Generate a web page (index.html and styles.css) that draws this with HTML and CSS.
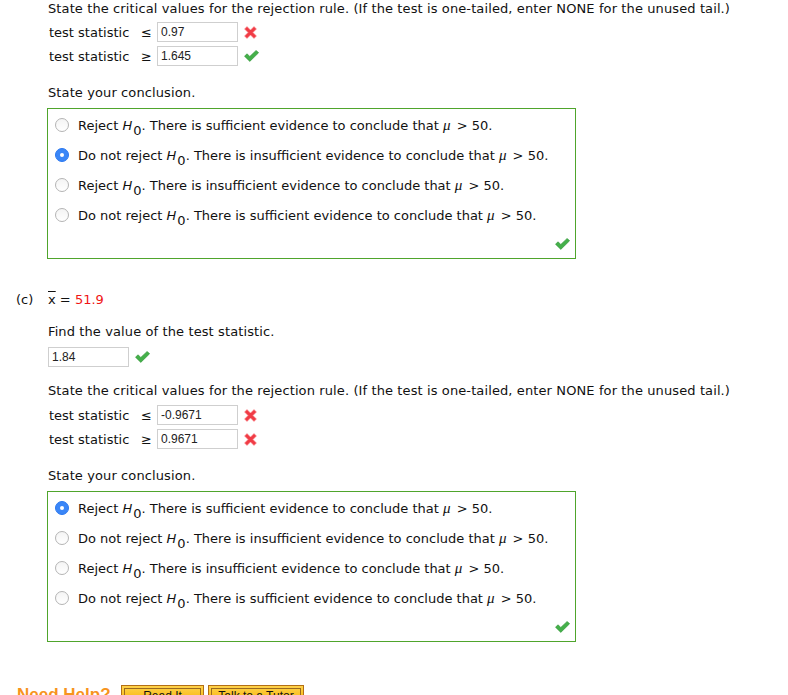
FILE: index.html
```html
<!DOCTYPE html>
<html>
<head>
<meta charset="utf-8">
<link rel="stylesheet" href="styles.css">
</head>
<body>
<div class="page">
  <div class="part cont">
    <p class="line first">State the critical values for the rejection rule. (If the test is one-tailed, enter NONE for the unused tail.)</p>
    <div class="crit">
      <div class="row"><span class="lbl">test statistic</span><span class="sym">≤</span><span class="inp">0.97</span><svg class="ico x" viewBox="0 0 13 13"><path d="M0.5 3 L3 0.5 L6.5 4 L10 0.5 L12.5 3 L9 6.5 L12.5 10 L10 12.5 L6.5 9 L3 12.5 L0.5 10 L4 6.5 Z"/></svg></div>
      <div class="row"><span class="lbl">test statistic</span><span class="sym">≥</span><span class="inp">1.645</span><svg class="ico ck" viewBox="0 0 15 12"><path d="M0.5 6.2 L3 3.8 L5.8 6.4 L12.2 0.4 L14.6 2.8 L5.8 11.4 Z"/></svg></div>
    </div>
    <p class="line sub">State your conclusion.</p>
    <div class="box">
      <div class="opt"><span class="radio"></span><span>Reject <i>H</i><sub>0</sub>. There is sufficient evidence to conclude that <i class="mu">μ</i> &gt; 50.</span></div>
      <div class="opt"><span class="radio on"></span><span>Do not reject <i>H</i><sub>0</sub>. There is insufficient evidence to conclude that <i class="mu">μ</i> &gt; 50.</span></div>
      <div class="opt"><span class="radio"></span><span>Reject <i>H</i><sub>0</sub>. There is insufficient evidence to conclude that <i class="mu">μ</i> &gt; 50.</span></div>
      <div class="opt"><span class="radio"></span><span>Do not reject <i>H</i><sub>0</sub>. There is sufficient evidence to conclude that <i class="mu">μ</i> &gt; 50.</span></div>
      <div class="boxfoot"><svg class="ico ck" viewBox="0 0 15 12"><path d="M0.5 6.2 L3 3.8 L5.8 6.4 L12.2 0.4 L14.6 2.8 L5.8 11.4 Z"/></svg></div>
    </div>
  </div>

  <div class="part c">
    <div class="head"><span class="plabel">(c)</span><span class="xbar">x</span> = <span class="red">51.9</span></div>
    <p class="line find">Find the value of the test statistic.</p>
    <div class="row single"><span class="inp">1.84</span><svg class="ico ck" viewBox="0 0 15 12"><path d="M0.5 6.2 L3 3.8 L5.8 6.4 L12.2 0.4 L14.6 2.8 L5.8 11.4 Z"/></svg></div>
    <p class="line find">State the critical values for the rejection rule. (If the test is one-tailed, enter NONE for the unused tail.)</p>
    <div class="crit c2">
      <div class="row"><span class="lbl">test statistic</span><span class="sym">≤</span><span class="inp">-0.9671</span><svg class="ico x" viewBox="0 0 13 13"><path d="M0.5 3 L3 0.5 L6.5 4 L10 0.5 L12.5 3 L9 6.5 L12.5 10 L10 12.5 L6.5 9 L3 12.5 L0.5 10 L4 6.5 Z"/></svg></div>
      <div class="row"><span class="lbl">test statistic</span><span class="sym">≥</span><span class="inp">0.9671</span><svg class="ico x" viewBox="0 0 13 13"><path d="M0.5 3 L3 0.5 L6.5 4 L10 0.5 L12.5 3 L9 6.5 L12.5 10 L10 12.5 L6.5 9 L3 12.5 L0.5 10 L4 6.5 Z"/></svg></div>
    </div>
    <p class="line sub">State your conclusion.</p>
    <div class="box">
      <div class="opt"><span class="radio on"></span><span>Reject <i>H</i><sub>0</sub>. There is sufficient evidence to conclude that <i class="mu">μ</i> &gt; 50.</span></div>
      <div class="opt"><span class="radio"></span><span>Do not reject <i>H</i><sub>0</sub>. There is insufficient evidence to conclude that <i class="mu">μ</i> &gt; 50.</span></div>
      <div class="opt"><span class="radio"></span><span>Reject <i>H</i><sub>0</sub>. There is insufficient evidence to conclude that <i class="mu">μ</i> &gt; 50.</span></div>
      <div class="opt"><span class="radio"></span><span>Do not reject <i>H</i><sub>0</sub>. There is sufficient evidence to conclude that <i class="mu">μ</i> &gt; 50.</span></div>
      <div class="boxfoot"><svg class="ico ck" viewBox="0 0 15 12"><path d="M0.5 6.2 L3 3.8 L5.8 6.4 L12.2 0.4 L14.6 2.8 L5.8 11.4 Z"/></svg></div>
    </div>
  </div>

  <div class="help">
    <span class="needhelp">Need Help?</span>
    <span class="btn b1"><span class="btn-in">Read It</span></span>
    <span class="btn b2"><span class="btn-in">Talk to a Tutor</span></span>
  </div>
</div>
</body>
</html>
```

FILE: styles.css
```css
html, body {
  margin: 0;
  padding: 0;
  background: #fff;
}
.page {
  font-family: "DejaVu Sans", Verdana, sans-serif;
  font-size: 13px;
  color: #111;
  overflow: hidden;
  height: 695px;
}
.part {
  padding-left: 48px;
}
.line {
  margin: 0;
  height: 16px;
  line-height: 18px;
  white-space: nowrap;
  letter-spacing: 0.11px;
}
.first {
  margin-top: 0;
}
.crit {
  margin-top: 6px;
  display: flex;
  flex-direction: column;
  gap: 4px;
}
.row {
  display: flex;
  align-items: center;
  height: 20px;
}
.lbl {
  width: 81px;
  padding-left: 1px;
}
.sym {
  width: 27px;
  padding-left: 11px;
  box-sizing: border-box;
}
.inp {
  box-sizing: border-box;
  width: 81px;
  height: 20px;
  border: 1px solid #cfcfcf;
  font-family: "Liberation Sans", Arial, sans-serif;
  font-size: 12px;
  line-height: 18px;
  padding-left: 3px;
  color: #222;
}
.ico {
  margin-left: 6px;
  display: block;
}
.ico.x {
  width: 13px;
  height: 13px;
  fill: #f03c46;
  stroke: #ff9aa0;
  stroke-width: 0.6;
  stroke-linejoin: round;
}
.ico.ck {
  width: 15px;
  height: 12px;
  fill: #44b04a;
  stroke: #2c9233;
  stroke-width: 0.6;
  stroke-linejoin: round;
}
.sub {
  margin-top: 18px;
}
.box {
  margin-top: 8px;
  margin-left: -1px;
  width: 529px;
  box-sizing: border-box;
  border: 1px solid #4fa52c;
  padding-top: 1px;
}
.opt {
  height: 30px;
  display: flex;
  align-items: center;
  white-space: nowrap;
}
.opt i {
  font-style: italic;
}
.opt sub {
  font-size: 13px;
  vertical-align: -5px;
  line-height: 0;
  margin-left: 1px;
}
.opt i.mu {
  font-family: "Liberation Serif", "Times New Roman", serif;
  font-size: 15px;
  margin-right: 2px;
}
.radio {
  box-sizing: border-box;
  width: 14px;
  height: 14px;
  border-radius: 50%;
  border: 1px solid #b4b4b4;
  background: linear-gradient(#f4f4f4, #fff);
  margin-left: 7px;
  margin-right: 9px;
  flex: none;
  position: relative;
}
.radio.on {
  border-color: #2b78f0;
  background: #3a86f7;
}
.radio.on::after {
  content: "";
  position: absolute;
  left: 4px;
  top: 4px;
  width: 4px;
  height: 4px;
  border-radius: 50%;
  background: #fff;
}
.boxfoot {
  height: 28px;
  display: flex;
  justify-content: flex-end;
  align-items: flex-start;
  padding-right: 5px;
  padding-top: 8px;
  box-sizing: border-box;
}
.c {
  margin-top: 33px;
}
.head {
  display: flex;
  align-items: center;
  height: 16px;
  line-height: 18px;
  margin-left: -32px;
  white-space: pre;
}
.plabel {
  width: 32px;
}
.xbar {
  text-decoration: overline;
}
.red {
  color: #f01414;
}
.find {
  margin-top: 15px;
}
.single {
  margin-top: 8px;
}
.c2 {
  margin-top: 7px;
}
.help {
  margin-top: 43px;
  padding-left: 17px;
  display: flex;
  align-items: flex-start;
  height: 20px;
}
.needhelp {
  font-family: "Liberation Sans", Arial, sans-serif;
  font-weight: bold;
  font-size: 17px;
  color: #f7941d;
  line-height: 20px;
  width: 104px;
}
.btn {
  box-sizing: border-box;
  height: 20px;
  border: 1px solid #b36f14;
  background: linear-gradient(#ffd24a, #f6b000);
  padding: 2px;
  margin-right: 4px;
}
.b1 { width: 83px; }
.b2 { width: 96px; }
.btn-in {
  display: block;
  height: 100%;
  box-sizing: border-box;
  border: 1px solid #9a6a1f;
  text-align: center;
  font-family: "Liberation Sans", Arial, sans-serif;
  font-size: 12px;
  line-height: 14px;
  color: #111;
}
```
